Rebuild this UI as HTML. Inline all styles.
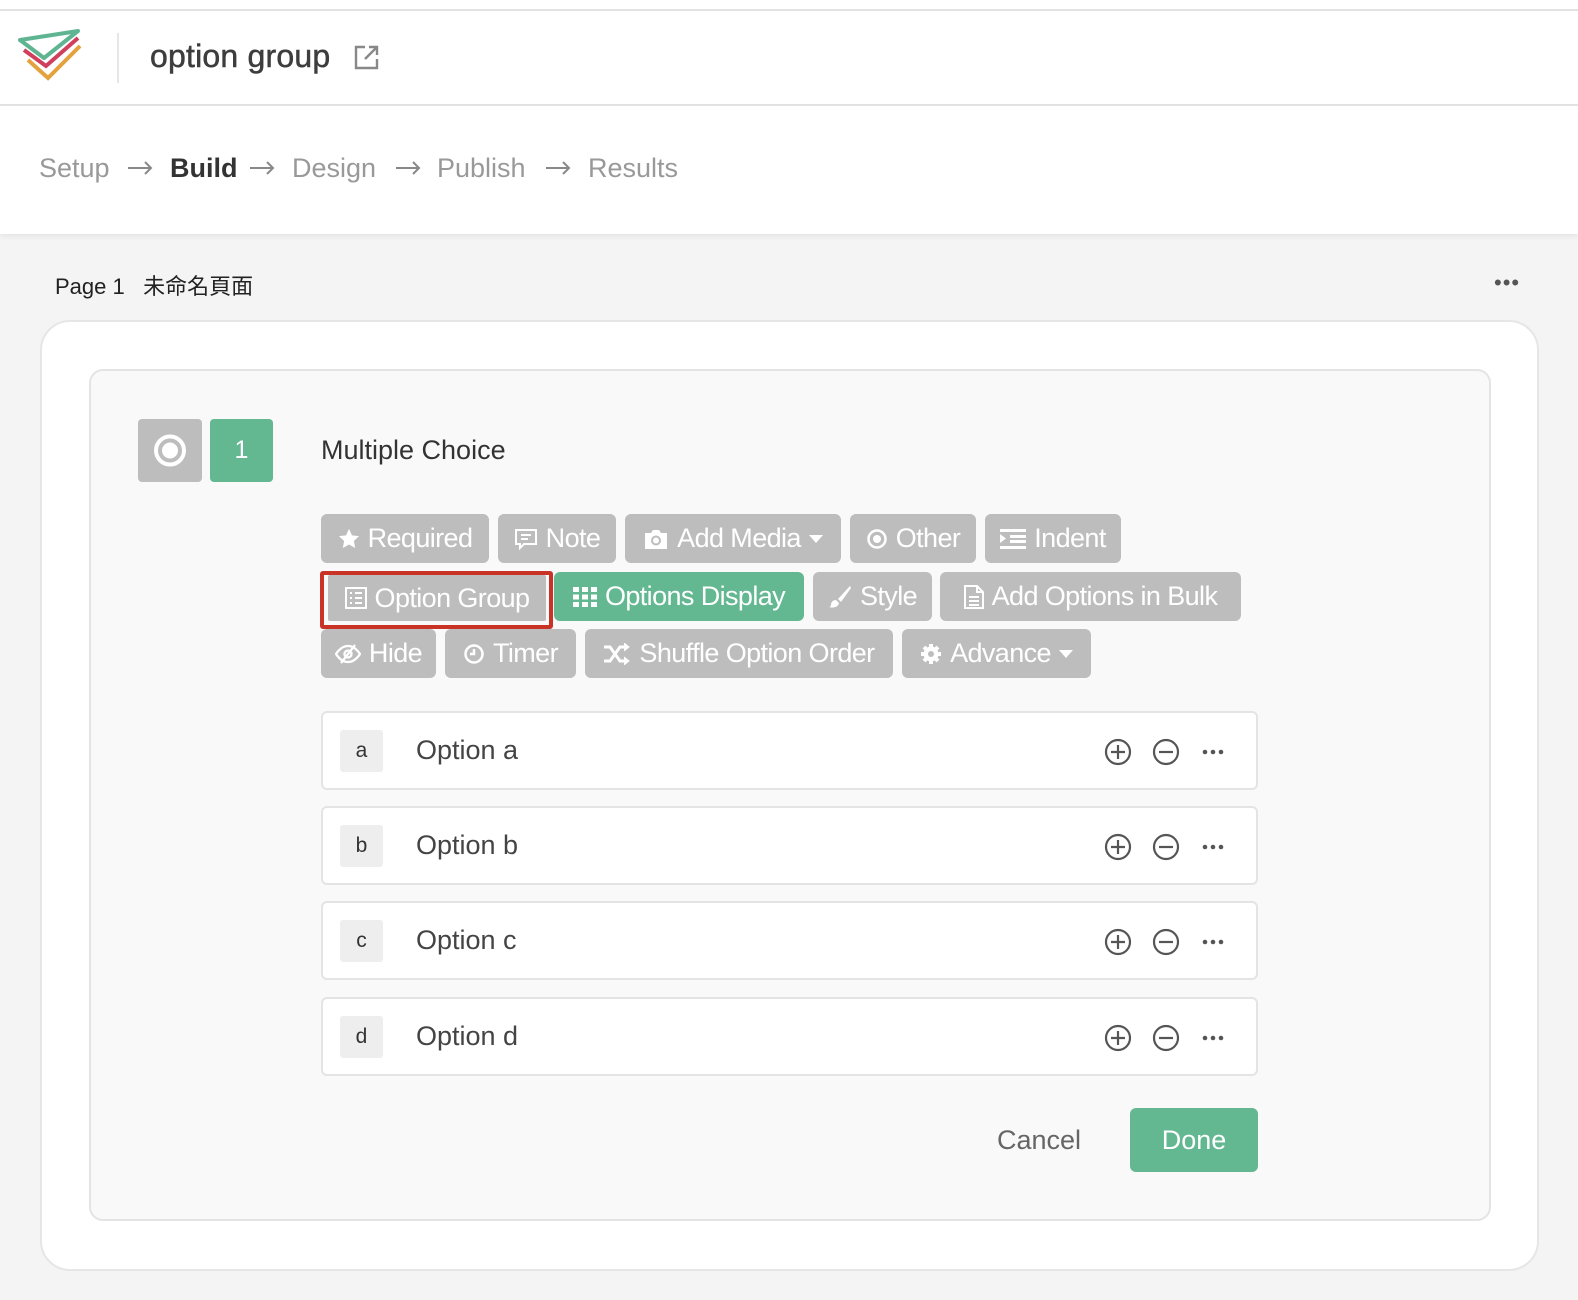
<!DOCTYPE html>
<html><head><meta charset="utf-8"><style>
*{margin:0;padding:0;box-sizing:border-box}
body{width:1578px;height:1300px;position:relative;background:#f4f4f4;font-family:"Liberation Sans","Noto Sans CJK TC",sans-serif;overflow:hidden}
.abs{position:absolute}
.top{left:0;top:0;width:1578px;height:234px;background:#fff;box-shadow:0 2px 6px rgba(0,0,0,.08)}
.b{position:absolute;height:49px;background:#bdbdbd;border-radius:6px;color:#fff;font-size:27px;letter-spacing:-0.6px;display:flex;align-items:center;justify-content:center;gap:8px;white-space:nowrap}
.b svg{flex:none}
.row{position:absolute;left:321px;width:937px;height:79px;background:#fff;border:2px solid #e4e4e4;border-radius:6px}
.lt{position:absolute;left:17px;top:17px;width:43px;height:42px;background:#eee;border-radius:3px;font-size:21px;color:#333;display:flex;align-items:center;justify-content:center}
.ot{position:absolute;left:93px;top:22px;font-size:27px;color:#444}
.ic{position:absolute;top:24px;right:22px}
.st{position:absolute;top:153px;font-size:27px;color:#999;white-space:nowrap}
.arw{position:absolute;top:161px}
</style></head><body>
<div class="abs top"></div>
<div class="abs" style="left:0;top:9px;width:1578px;height:2px;background:#e2e2e2"></div>
<div class="abs" style="left:0;top:104px;width:1578px;height:2px;background:#e2e2e2"></div>
<svg class="abs" style="left:18px;top:28px" width="66" height="62" viewBox="0 0 66 62">
<path d="M2 12 L60 3 L26 30 Z" fill="none" stroke="#5fb592" stroke-width="4" stroke-linejoin="round"/>
<path d="M6 22 L28 38 L60 10" fill="none" stroke="#d0405c" stroke-width="4"/>
<path d="M10 32 L30 50 L62 18" fill="none" stroke="#e3a23e" stroke-width="4"/>
</svg>
<div class="abs" style="left:117px;top:33px;width:2px;height:50px;background:#e6e6e6"></div>
<div class="abs" style="left:150px;top:38px;font-size:32px;color:#3d3d3d;letter-spacing:0.2px;-webkit-text-stroke:0.5px #3d3d3d">option group</div>
<svg class="abs" style="left:354px;top:45px" width="25" height="25" viewBox="0 0 25 25" fill="none" stroke="#888" stroke-width="2.4"><path d="M11 2H2v21h21v-9"/><path d="M15 2h8v8M23 2L11 14"/></svg>

<div class="st" style="left:39px">Setup</div>
<svg class="arw" style="left:128px" width="25" height="14" fill="none" stroke="#888" stroke-width="2"><path d="M0 7h23M17 1l6 6-6 6"/></svg>
<div class="st" style="left:170px;color:#333;font-weight:bold">Build</div>
<svg class="arw" style="left:250px" width="25" height="14" fill="none" stroke="#888" stroke-width="2"><path d="M0 7h23M17 1l6 6-6 6"/></svg>
<div class="st" style="left:292px">Design</div>
<svg class="arw" style="left:396px" width="25" height="14" fill="none" stroke="#888" stroke-width="2"><path d="M0 7h23M17 1l6 6-6 6"/></svg>
<div class="st" style="left:437px">Publish</div>
<svg class="arw" style="left:546px" width="25" height="14" fill="none" stroke="#888" stroke-width="2"><path d="M0 7h23M17 1l6 6-6 6"/></svg>
<div class="st" style="left:588px">Results</div>

<div class="abs" style="left:55px;top:269px;font-size:22px;color:#222">Page 1 &nbsp;&nbsp;未命名頁面</div>
<div class="abs" style="left:1494px;top:270px;font-size:22px;color:#555;letter-spacing:1px">•••</div>
<div class="abs" style="left:40px;top:320px;width:1499px;height:951px;background:#fff;border:2px solid #e6e6e6;border-radius:30px"></div>
<div class="abs" style="left:89px;top:369px;width:1402px;height:852px;background:#f9f9f9;border:2px solid #e4e4e4;border-radius:14px"></div>
<div class="abs" style="left:138px;top:419px;width:64px;height:63px;background:#bdbdbd;border-radius:4px"><svg width="64" height="63"><circle cx="32" cy="31.5" r="14" fill="none" stroke="#fff" stroke-width="4"/><circle cx="32" cy="31.5" r="8" fill="#fff"/></svg></div>
<div class="abs" style="left:210px;top:419px;width:63px;height:63px;background:#63b892;border-radius:4px;color:#fff;font-size:25px;display:flex;align-items:center;justify-content:center">1</div>
<div class="abs" style="left:321px;top:435px;font-size:27px;color:#333">Multiple Choice</div>

<div class="b" style="left:321px;top:514px;width:168px"><svg width="22" height="22" viewBox="0 0 24 24"><path d="M12 1l3.3 7 7.7.9-5.7 5.3 1.5 7.6L12 18l-6.8 3.8 1.5-7.6L1 8.9 8.7 8z" fill="#fff"/></svg>Required</div>
<div class="b" style="left:498px;top:514px;width:118px"><svg width="24" height="24" viewBox="0 0 24 24" fill="none" stroke="#fff" stroke-width="2"><path d="M2 3h20v14H10l-4 4v-4H2z"/><path d="M7 8h10M7 12h7"/></svg>Note</div>
<div class="b" style="left:625px;top:514px;width:216px"><svg width="26" height="22" viewBox="0 0 26 22"><path d="M2 5h6l2-3h6l2 3h6v16H2z" fill="#fff"/><circle cx="13" cy="12.5" r="5" fill="#bdbdbd"/><circle cx="13" cy="12.5" r="3" fill="#fff"/></svg>Add Media<svg width="14" height="8"><path d="M0 0h14L7 8z" fill="#fff"/></svg></div>
<div class="b" style="left:850px;top:514px;width:126px"><svg width="22" height="22"><circle cx="11" cy="11" r="8.5" fill="none" stroke="#fff" stroke-width="2.5"/><circle cx="11" cy="11" r="4" fill="#fff"/></svg>Other</div>
<div class="b" style="left:985px;top:514px;width:136px"><svg width="26" height="20" fill="#fff"><rect x="0" y="0" width="26" height="3"/><rect x="10" y="6" width="16" height="3"/><rect x="10" y="11" width="16" height="3"/><rect x="0" y="17" width="26" height="3"/><path d="M0 5l6 4.5-6 4.5z"/></svg>Indent</div>

<div class="abs" style="left:320px;top:571px;width:233px;height:58px;border:4px solid #c93326;border-radius:3px"></div>
<div class="b" style="left:328px;top:575px;width:218px;height:46px;border-radius:2px"><svg width="22" height="22" fill="none" stroke="#fff" stroke-width="2"><rect x="1" y="1" width="20" height="20"/><path d="M5 6h2M10 6h7M5 11h2M10 11h7M5 16h2M10 16h7"/></svg>Option Group</div>
<div class="b" style="left:554px;top:572px;width:250px;background:#63b892"><svg width="24" height="20" fill="#fff"><rect x="0" y="0" width="6" height="5"/><rect x="9" y="0" width="6" height="5"/><rect x="18" y="0" width="6" height="5"/><rect x="0" y="7.5" width="6" height="5"/><rect x="9" y="7.5" width="6" height="5"/><rect x="18" y="7.5" width="6" height="5"/><rect x="0" y="15" width="6" height="5"/><rect x="9" y="15" width="6" height="5"/><rect x="18" y="15" width="6" height="5"/></svg>Options Display</div>
<div class="b" style="left:813px;top:572px;width:119px"><svg width="24" height="24" viewBox="0 0 24 24" fill="#fff"><path d="M22 1L10 14l3 3L23 3z"/><path d="M8 15c-3 0-5 2-5 5 0 1-1 2-2 2 3 1 9 1 10-4z"/></svg>Style</div>
<div class="b" style="left:940px;top:572px;width:301px"><svg width="20" height="24" fill="none" stroke="#fff" stroke-width="2"><path d="M1 1h12l6 6v16H1z"/><path d="M13 1v6h6M5 12h10M5 16h10M5 20h10"/></svg>Add Options in Bulk</div>

<div class="b" style="left:321px;top:629px;width:115px"><svg width="26" height="20" viewBox="0 0 26 20" fill="none" stroke="#fff" stroke-width="2.3"><path d="M1 10c4-6 8-8 12-8s8 2 12 8c-4 6-8 8-12 8s-8-2-12-8z"/><circle cx="13" cy="10" r="3.5"/><path d="M6 19L20 1"/></svg>Hide</div>
<div class="b" style="left:445px;top:629px;width:131px"><svg width="22" height="22" fill="none" stroke="#fff" stroke-width="2.5"><circle cx="11" cy="11" r="8.5"/><path d="M11 6v5H7"/></svg>Timer</div>
<div class="b" style="left:585px;top:629px;width:308px"><svg width="28" height="22" viewBox="0 0 28 22" fill="none" stroke="#fff" stroke-width="3"><path d="M1 4h6l10 14h6M1 18h6l10-14h6"/><path d="M21 0l5 4-5 4M21 14l5 4-5 4" fill="#fff" stroke-width="1"/></svg>Shuffle Option Order</div>
<div class="b" style="left:902px;top:629px;width:189px"><svg width="22" height="22" viewBox="0 0 22 22"><circle cx="11" cy="11" r="7.5" fill="#fff"/><g stroke="#fff" stroke-width="4"><path d="M11 1v20M1 11h20M4 4l14 14M18 4L4 18"/></g><circle cx="11" cy="11" r="3" fill="#bdbdbd"/></svg>Advance<svg width="14" height="8"><path d="M0 0h14L7 8z" fill="#fff"/></svg></div>

<div class="row" style="top:711px"><div class="lt">a</div><div class="ot">Option a</div><svg class="ic" width="130" height="30"><g fill="none" stroke="#555" stroke-width="2.2"><circle cx="14" cy="15" r="12"/><path d="M14 8v14M7 15h14"/><circle cx="62" cy="15" r="12"/><path d="M55 15h14"/></g><g fill="#555"><circle cx="101" cy="15" r="2.3"/><circle cx="109" cy="15" r="2.3"/><circle cx="117" cy="15" r="2.3"/></g></svg></div>
<div class="row" style="top:806px"><div class="lt">b</div><div class="ot">Option b</div><svg class="ic" width="130" height="30"><g fill="none" stroke="#555" stroke-width="2.2"><circle cx="14" cy="15" r="12"/><path d="M14 8v14M7 15h14"/><circle cx="62" cy="15" r="12"/><path d="M55 15h14"/></g><g fill="#555"><circle cx="101" cy="15" r="2.3"/><circle cx="109" cy="15" r="2.3"/><circle cx="117" cy="15" r="2.3"/></g></svg></div>
<div class="row" style="top:901px"><div class="lt">c</div><div class="ot">Option c</div><svg class="ic" width="130" height="30"><g fill="none" stroke="#555" stroke-width="2.2"><circle cx="14" cy="15" r="12"/><path d="M14 8v14M7 15h14"/><circle cx="62" cy="15" r="12"/><path d="M55 15h14"/></g><g fill="#555"><circle cx="101" cy="15" r="2.3"/><circle cx="109" cy="15" r="2.3"/><circle cx="117" cy="15" r="2.3"/></g></svg></div>
<div class="row" style="top:997px"><div class="lt">d</div><div class="ot">Option d</div><svg class="ic" width="130" height="30"><g fill="none" stroke="#555" stroke-width="2.2"><circle cx="14" cy="15" r="12"/><path d="M14 8v14M7 15h14"/><circle cx="62" cy="15" r="12"/><path d="M55 15h14"/></g><g fill="#555"><circle cx="101" cy="15" r="2.3"/><circle cx="109" cy="15" r="2.3"/><circle cx="117" cy="15" r="2.3"/></g></svg></div>

<div class="abs" style="left:997px;top:1125px;font-size:27px;color:#666">Cancel</div>
<div class="abs" style="left:1130px;top:1108px;width:128px;height:64px;background:#63b892;border-radius:6px;color:#fff;font-size:27px;display:flex;align-items:center;justify-content:center">Done</div>
</body></html>
